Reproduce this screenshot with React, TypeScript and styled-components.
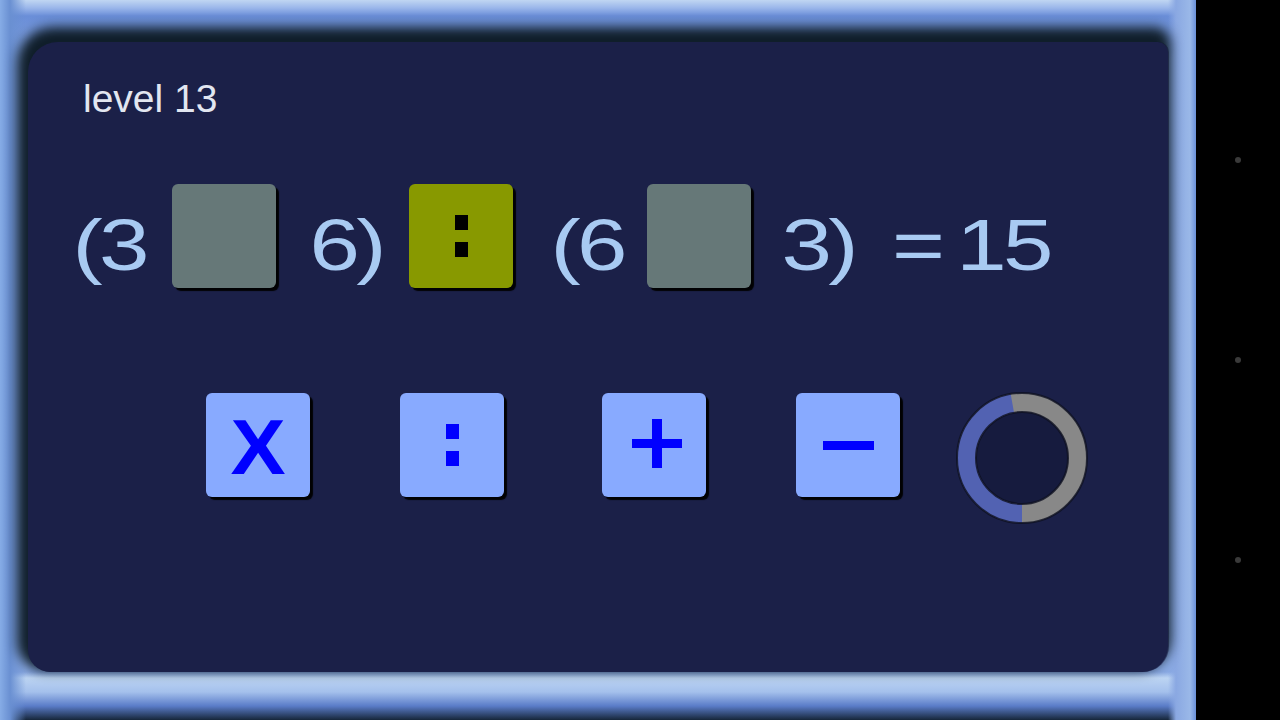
import styled, { createGlobalStyle } from "styled-components";

const GlobalStyle = createGlobalStyle`
  html, body {
    margin: 0;
    padding: 0;
    background: #000;
  }

  #root {
    width: 1280px;
    height: 720px;
    overflow: hidden;
  }
`;

const Styled_Screen = styled.div`
  display: flex;
  width: 1280px;
  height: 720px;
  background: #000;
`;

const Styled_Frame = styled.div`
  box-sizing: border-box;
  width: 1196px;
  height: 720px;
  padding: 42px 28px 48px 28px;
  display: flex;
  background:
    linear-gradient(to right, #86ace6 0px, #6a90d2 10px, rgba(106, 144, 210, 0) 26px),
    linear-gradient(to left, #6a90d8 0px, #9ab8e8 6px, #8aa8e2 20px, rgba(138, 168, 226, 0) 28px),
    linear-gradient(
      to bottom,
      #c0d6f2 0px,
      #9ab6ea 8px,
      #6a8ed8 16px,
      #8aaae4 60px,
      #8aaae4 calc(100% - 48px),
      #bcd4f2 calc(100% - 42px),
      #a4c0ec calc(100% - 28px),
      #5a7cc8 calc(100% - 14px),
      #16263a 100%
    );
`;

const Styled_Panel = styled.main`
  flex: 1;
  display: flex;
  flex-direction: column;
  padding: 37px 0 0 55px;
  background-color: #1b2048;
  border-radius: 30px 10px 26px 22px;
  box-shadow:
    -4px -8px 12px 7px rgba(12, 26, 36, 0.97),
    1px 0 0 #4a5690;
  font-family: "Liberation Sans", Arial, sans-serif;
`;

const Styled_Level = styled.div`
  font-size: 39px;
  line-height: 1;
  color: #e2e6f0;
`;

const Styled_Equation = styled.div`
  display: flex;
  align-items: flex-start;
  margin-top: 66px;
  margin-left: -10px;
`;

const Styled_Term = styled.div<{ $width: number; $gap: number }>`
  width: ${(p) => p.$width}px;
  margin-left: ${(p) => p.$gap}px;
  margin-top: 25px;
  display: flex;
  justify-content: center;
  font-size: 72px;
  line-height: 1;
  letter-spacing: -3px;
  white-space: nowrap;
  color: #a8caf2;
`;

const Styled_TermText = styled.span`
  display: inline-block;
  transform: scaleX(1.26);
  margin-right: -3px;
`;

const Styled_Tile = styled.div<{ $gap: number; $color: string }>`
  flex: none;
  width: 104px;
  height: 104px;
  margin-left: ${(p) => p.$gap}px;
  border-radius: 6px;
  background-color: ${(p) => p.$color};
  box-shadow: 3px 3px 1px rgba(0, 0, 0, 0.95);
  display: flex;
  align-items: center;
  justify-content: center;
`;

const Styled_Keypad = styled.div`
  display: flex;
  align-items: flex-start;
  margin-top: 105px;
  padding-left: 123px;
`;

const Styled_Key = styled.button<{ $gap: number }>`
  flex: none;
  width: 104px;
  height: 104px;
  padding: 0;
  margin-left: ${(p) => p.$gap}px;
  border: none;
  border-radius: 6px;
  background-color: #88aaff;
  box-shadow: 3px 3px 1px rgba(0, 0, 0, 0.95);
  display: flex;
  align-items: center;
  justify-content: center;
  color: #0000ff;
  cursor: pointer;
`;

const Styled_KeyLetter = styled.span`
  font-family: "Liberation Sans", Arial, sans-serif;
  font-weight: bold;
  font-size: 78px;
  line-height: 1;
  margin-top: 4px;
  transform: scaleX(1.06);
`;

const Styled_Colon = styled.span<{ $color: string }>`
  display: flex;
  flex-direction: column;
  gap: 12px;

  &::before,
  &::after {
    content: "";
    width: 13px;
    height: 15px;
    background-color: ${(p) => p.$color};
  }
`;

const Styled_Plus = styled.span`
  position: relative;
  width: 50px;
  height: 49px;
  margin: -4px 0 0 6px;

  &::before,
  &::after {
    content: "";
    position: absolute;
    background-color: #0000ff;
  }

  &::before {
    left: 0;
    right: 0;
    top: 20px;
    height: 9px;
  }

  &::after {
    top: 0;
    bottom: 0;
    left: 20px;
    width: 10px;
  }
`;

const Styled_Minus = styled.span`
  width: 51px;
  height: 9px;
  margin-top: 1px;
  background-color: #0000ff;
`;

const Styled_Timer = styled.svg`
  flex: none;
  margin-left: 56px;
  margin-top: -1px;
`;

const Styled_NavBar = styled.nav`
  flex: 1;
  display: flex;
  flex-direction: column;
  align-items: center;
  justify-content: space-around;
  padding: 60px 0;
  background: #000;
`;

const Styled_NavDot = styled.span`
  width: 6px;
  height: 6px;
  border-radius: 50%;
  background-color: #3a3a3a;
`;

function Timer() {
  const c = 66;
  const r = 55.5;
  const end = (350 * Math.PI) / 180;
  const ex = c + r * Math.sin(end);
  const ey = c - r * Math.cos(end);

  return (
    <Styled_Timer width="132" height="132" viewBox="0 0 132 132">
      <circle cx={c} cy={c} r={46} fill="#161b3e" />
      <circle cx={c} cy={c} r={r} fill="none" stroke="#888888" strokeWidth="19" />
      <path d={`M ${c} ${c + r} A ${r} ${r} 0 0 1 ${ex} ${ey}`} fill="none" stroke="#5262b2" strokeWidth="19" />
      <circle cx={c} cy={c} r={65} fill="none" stroke="#0e1020" strokeWidth="2" opacity="0.8" />
      <circle cx={c} cy={c} r={46} fill="none" stroke="#0e1020" strokeWidth="2" opacity="0.8" />
    </Styled_Timer>
  );
}

export default function App() {
  return (
    <>
      <GlobalStyle />
      <Styled_Screen>
        <Styled_Frame>
          <Styled_Panel>
            <Styled_Level>level 13</Styled_Level>

            <Styled_Equation>
              <Styled_Term $width={70} $gap={0}>
                <Styled_TermText>(3</Styled_TermText>
              </Styled_Term>
              <Styled_Tile $gap={29} $color="#667878" />
              <Styled_Term $width={67} $gap={35}>
                <Styled_TermText>6)</Styled_TermText>
              </Styled_Term>
              <Styled_Tile $gap={31} $color="#889900">
                <Styled_Colon $color="#000" />
              </Styled_Tile>
              <Styled_Term $width={69} $gap={38}>
                <Styled_TermText>(6</Styled_TermText>
              </Styled_Term>
              <Styled_Tile $gap={27} $color="#667878" />
              <Styled_Term $width={67} $gap={32}>
                <Styled_TermText>3)</Styled_TermText>
              </Styled_Term>
              <Styled_Term $width={48} $gap={41}>
                <Styled_TermText>=</Styled_TermText>
              </Styled_Term>
              <Styled_Term $width={87} $gap={19}>
                <Styled_TermText>15</Styled_TermText>
              </Styled_Term>
            </Styled_Equation>

            <Styled_Keypad>
              <Styled_Key $gap={0} aria-label="multiply">
                <Styled_KeyLetter>X</Styled_KeyLetter>
              </Styled_Key>
              <Styled_Key $gap={90} aria-label="divide">
                <Styled_Colon $color="#0000ff" />
              </Styled_Key>
              <Styled_Key $gap={98} aria-label="add">
                <Styled_Plus />
              </Styled_Key>
              <Styled_Key $gap={90} aria-label="subtract">
                <Styled_Minus />
              </Styled_Key>
              <Timer />
            </Styled_Keypad>
          </Styled_Panel>
        </Styled_Frame>

        <Styled_NavBar>
          <Styled_NavDot />
          <Styled_NavDot />
          <Styled_NavDot />
        </Styled_NavBar>
      </Styled_Screen>
    </>
  );
}
